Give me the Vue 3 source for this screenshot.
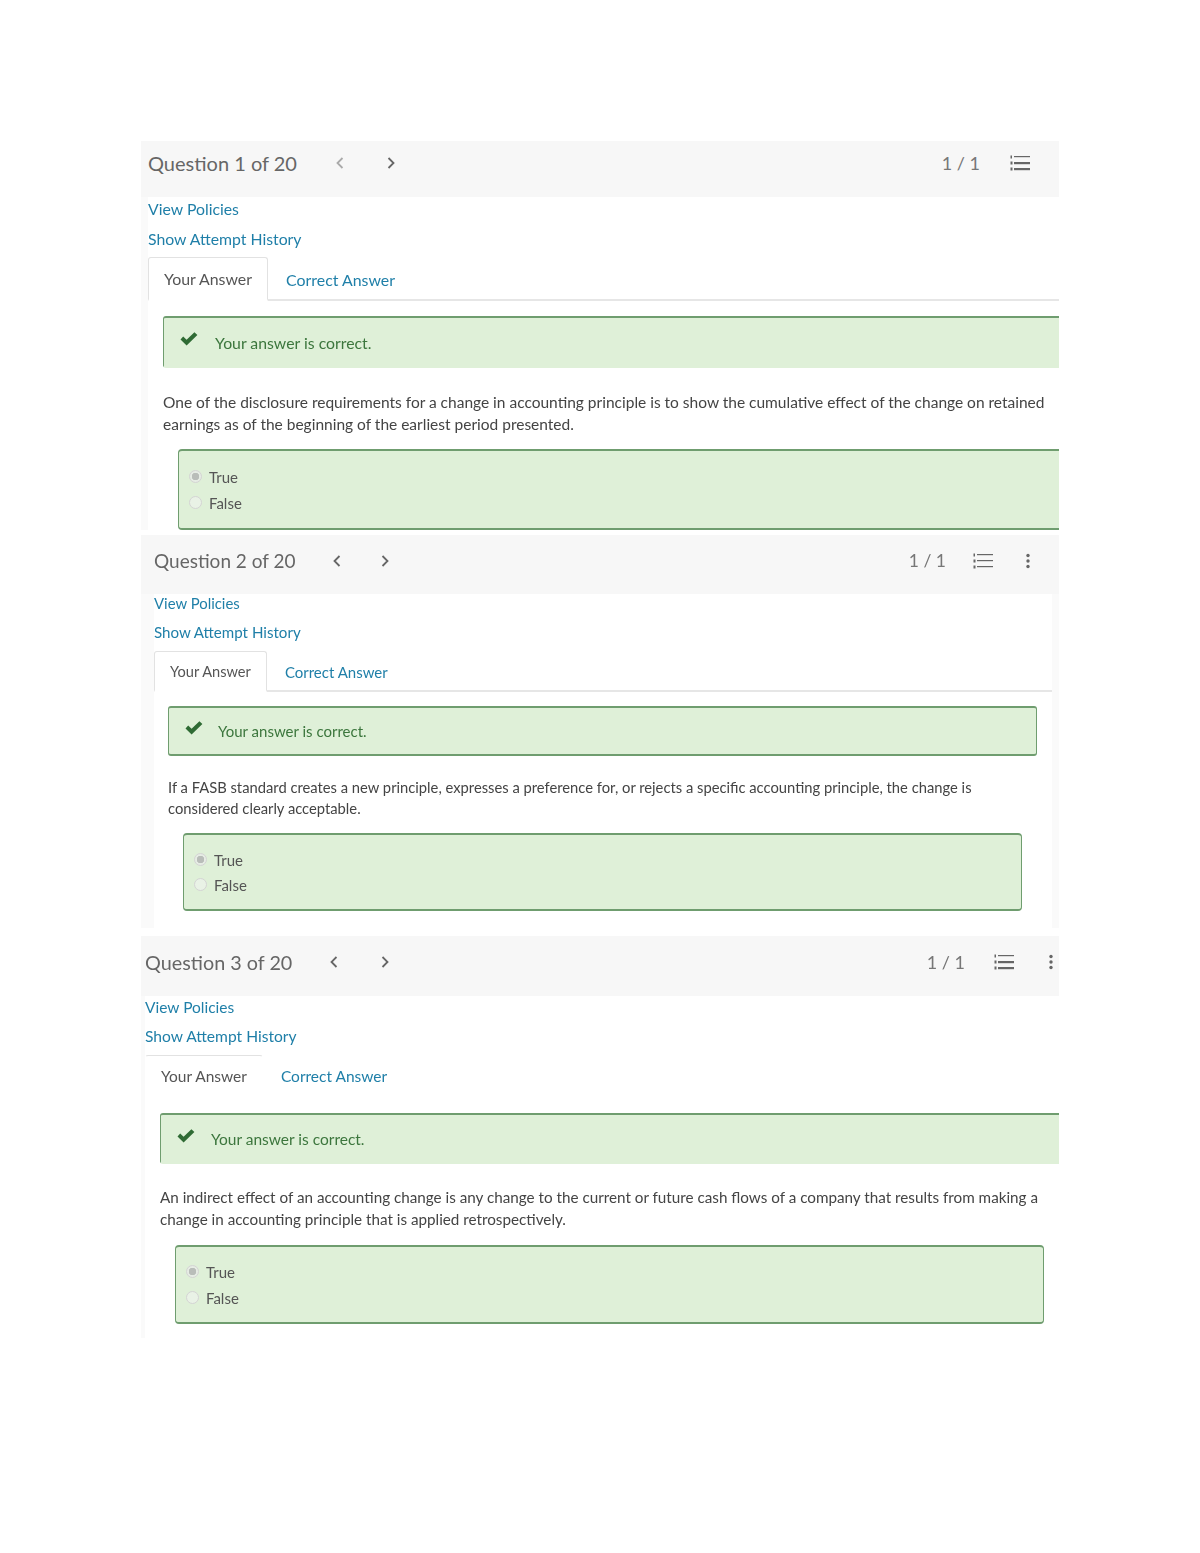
<template>
  <div class="page">
    <section v-for="q in questions" :key="q.id" class="question" :class="'q' + q.id">
      <header class="q-head">
        <h2 class="q-title">Question {{ q.id }} of 20</h2>
        <div class="q-nav">
          <svg class="chev" :class="{ dim: q.id === 1 }" viewBox="0 0 10 14"><path d="M7.5 2 L2.5 7 L7.5 12" /></svg>
          <svg class="chev" viewBox="0 0 10 14"><path d="M2.5 2 L7.5 7 L2.5 12" /></svg>
        </div>
        <div class="q-score">1 / 1</div>
        <svg class="list-icon" viewBox="0 0 20 16">
          <rect x="0.5" y="0.5" width="1.5" height="3" />
          <rect x="0.5" y="6.5" width="2" height="3" />
          <rect x="0.5" y="12.5" width="2" height="3" />
          <rect class="bar first" x="4" y="1" width="16" />
          <rect class="bar" x="4" y="7" width="16" />
          <rect class="bar" x="4" y="13" width="16" />
        </svg>
        <svg v-if="q.id > 1" class="dots-icon" viewBox="0 0 4 16">
          <circle cx="2" cy="2.5" r="1.7" />
          <circle cx="2" cy="8" r="1.7" />
          <circle cx="2" cy="13.5" r="1.7" />
        </svg>
      </header>

      <div class="q-body">
        <a class="q-link policies">View Policies</a>
        <a class="q-link history">Show Attempt History</a>

        <div class="tabs">
          <span class="tab active">Your Answer</span>
          <span class="tab">Correct Answer</span>
        </div>

        <div class="alert">
          <svg class="check" viewBox="0 0 18 14"><path d="M0.5 7.5 L3.2 4.6 L6.6 7.8 L14.4 0.2 L17.4 3 L6.6 13.6 Z" /></svg>
          <span>{{ q.feedback }}</span>
        </div>

        <p class="q-text">{{ q.line1 }}<br />{{ q.line2 }}</p>

        <div class="options">
          <label class="option"><span class="radio checked"></span>True</label>
          <label class="option"><span class="radio"></span>False</label>
        </div>
      </div>
    </section>
  </div>
</template>

<script setup>
const questions = [
  {
    id: 1,
    feedback: 'Your answer is correct.',
    line1: 'One of the disclosure requirements for a change in accounting principle is to show the cumulative effect of the change on retained',
    line2: 'earnings as of the beginning of the earliest period presented.'
  },
  {
    id: 2,
    feedback: 'Your answer is correct.',
    line1: 'If a FASB standard creates a new principle, expresses a preference for, or rejects a specific accounting principle, the change is',
    line2: 'considered clearly acceptable.'
  },
  {
    id: 3,
    feedback: 'Your answer is correct.',
    line1: 'An indirect effect of an accounting change is any change to the current or future cash flows of a company that results from making a',
    line2: 'change in accounting principle that is applied retrospectively.'
  }
];
</script>

<style scoped>
.page {
  width: 918px;
  padding: 141px 0 0 141px;
  font-family: Lato, "Open Sans", sans-serif;
  color: #555;
  filter: blur(0.45px);
}

.question {
  display: flex;
  flex-direction: column;
}

.q1 {
  height: 389px;
  --head-h: 56px;
  --head-shift: 13px;
  --inset: 7px;
  --right-strip: 0px;
  --title-size: 20px;
  --chev-left: 38px;
  --chev-gap: 41px;
}

.q2 {
  height: 393px;
  margin-top: 5px;
  --head-h: 59px;
  --head-shift: 8px;
  --inset: 13px;
  --right-strip: 7px;
  --title-size: 19px;
  --chev-left: 36px;
  --chev-gap: 38px;
}

.q3 {
  height: 402px;
  margin-top: 8px;
  --head-h: 60px;
  --head-shift: 9px;
  --inset: 4px;
  --right-strip: 0px;
  --title-size: 19.8px;
  --chev-left: 37px;
  --chev-gap: 41px;
}

.q-head {
  display: flex;
  align-items: center;
  flex: none;
  box-sizing: border-box;
  height: var(--head-h);
  padding-left: var(--inset);
  padding-bottom: var(--head-shift);
  background: #f7f7f7;
}

.q-title {
  margin: 0;
  font-size: var(--title-size);
  font-weight: 400;
  color: #666;
  white-space: nowrap;
}

.q-nav {
  display: flex;
  gap: var(--chev-gap);
  margin-left: var(--chev-left);
}

.chev {
  width: 10px;
  height: 14px;
  fill: none;
  stroke: #666;
  stroke-width: 1.8;
}

.chev.dim {
  stroke: #aaa;
}

.q-score {
  margin-left: auto;
  font-size: 18px;
  color: #777;
  white-space: nowrap;
}

.list-icon {
  width: 20px;
  height: 16px;
  fill: #666;
}

.bar {
  height: 2.2px;
}

.bar.first {
  height: 1.2px;
}

.q2 .bar {
  height: 1.2px;
}

.dots-icon {
  width: 4px;
  height: 16px;
  fill: #666;
}

.q1 .q-score { margin-right: 30px; }
.q1 .list-icon { margin-right: 29px; }
.q2 .q-score { margin-right: 27px; font-size: 17.5px; }
.q2 .list-icon { margin-right: 33px; }
.q2 .dots-icon { margin-right: 29px; }
.q3 .q-score { margin-right: 29px; }
.q3 .list-icon { margin-right: 35px; }
.q3 .dots-icon { margin-right: 6px; }

.q-body {
  flex: 1;
  display: flex;
  flex-direction: column;
  align-items: flex-start;
  margin-left: var(--inset);
  margin-right: var(--right-strip);
  background: #fff;
  box-shadow: calc(0px - var(--inset)) 0 0 #fafafa, var(--right-strip) 0 0 #fafafa;
}

.q-link {
  font-size: 15.8px;
  line-height: 20px;
  color: #1f7fa8;
  white-space: nowrap;
}

.q1 .policies { margin-top: 2px; }
.q1 .history { margin-top: 10px; }
.q2 .policies { margin-top: -1px; font-size: 14.9px; }
.q2 .history { margin-top: 9px; font-size: 15.1px; }
.q3 .policies { margin-top: 1px; font-size: 15.5px; }
.q3 .history { margin-top: 9px; font-size: 15.6px; }

.tabs {
  display: flex;
  align-self: stretch;
  flex: none;
  border-bottom: 2px solid #e6e6e6;
}

.q1 .tabs { height: 42px; margin-top: 8px; }
.q2 .tabs { height: 39px; margin-top: 9px; }
.q3 .tabs { height: 40px; margin-top: 9px; border-bottom-color: transparent; }

.tab {
  display: flex;
  align-items: center;
  padding: 0 18px;
  margin-bottom: -2px;
  font-size: 15.9px;
  color: #1f7fa8;
  white-space: nowrap;
}

.tab.active {
  padding: 0 15px;
  color: #555;
  border: 1px solid #e2e2e2;
  border-bottom: 2px solid #fff;
  border-radius: 3px 3px 0 0;
}

.q2 .tab { font-size: 15px; padding: 0 18px; }
.q2 .tab.active { font-size: 14.6px; padding: 0 15px; }
.q3 .tab { font-size: 15.5px; padding: 0 18px; }
.q3 .tab.active { padding: 0 15px; border-left-color: #fff; border-right-color: #fff; }

.alert {
  display: flex;
  align-items: center;
  align-self: stretch;
  flex: none;
  box-sizing: border-box;
  border: 1px solid #6f9d6f;
  border-top-width: 2px;
  border-bottom-width: 2px;
  border-radius: 3px;
  background: #dff0d8;
  color: #3c763d;
  font-size: 15.8px;
}

.q1 .alert { height: 52px; margin: 15px 0 0 15px; border-right: 0; border-bottom-color: #dff0d8; border-radius: 3px 0 0 3px; }
.q2 .alert { height: 50px; margin: 14px 15px 0 14px; font-size: 15px; }
.q3 .alert { height: 51px; margin: 16px 0 0 15px; border-right: 0; border-bottom-color: #dff0d8; border-radius: 3px 0 0 3px; font-size: 15.5px; }

.check {
  width: 18px;
  height: 14px;
  margin: -6px 17px 0 16px;
  fill: #2f6b34;
}

.q2 .check { margin-right: 15px; }
.q3 .check { margin-right: 16px; }

.q-text {
  margin: 0;
  font-size: 15.5px;
  line-height: 22px;
  color: #444;
  white-space: nowrap;
}

.q1 .q-text { margin: 23px 0 0 15px; }
.q2 .q-text { margin: 21px 0 0 14px; font-size: 14.75px; line-height: 21px; }
.q3 .q-text { margin: 22px 0 0 15px; font-size: 15.24px; }

.options {
  display: flex;
  flex-direction: column;
  justify-content: center;
  align-self: stretch;
  flex: none;
  box-sizing: border-box;
  border: 1px solid #6f9d6f;
  border-top-width: 2px;
  border-bottom-width: 2px;
  border-radius: 4px;
  background: #dff0d8;
  gap: 4px;
}

.q1 .options { height: 81px; margin: 14px 0 0 30px; border-right: 0; border-radius: 4px 0 0 4px; }
.q2 .options { height: 78px; margin: 14px 30px 0 29px; gap: 3px; }
.q3 .options { height: 79px; margin: 15px 15px 0 30px; }

.option {
  display: flex;
  align-items: center;
  height: 22px;
  padding-left: 10px;
  font-size: 15px;
  color: #555;
}

.radio {
  flex: none;
  box-sizing: border-box;
  width: 13px;
  height: 13px;
  margin-right: 7px;
  border: 1px solid #d4d4d4;
  border-radius: 50%;
  background: #e9f2e6;
}

.radio.checked {
  border-color: #d4d4d4;
  background: radial-gradient(circle, #b9bdb9 0 3.5px, #e6ece4 4px);
}
</style>
